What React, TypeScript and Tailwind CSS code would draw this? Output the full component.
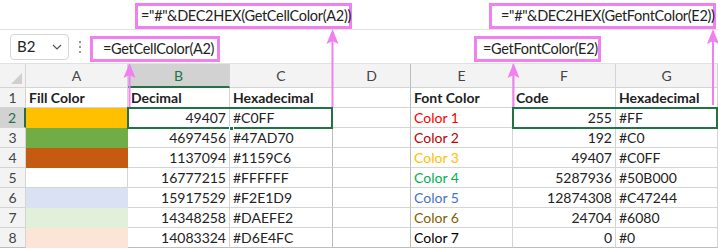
import React from 'react';

type Row = { fill: string; dec: string; hex: string; label: string; labelColor: string; code: string; codeHex: string };

const rows: Row[] = [
  { fill: '#FFC000', dec: '49407', hex: '#C0FF', label: 'Color 1', labelColor: '#FF0000', code: '255', codeHex: '#FF' },
  { fill: '#70AD47', dec: '4697456', hex: '#47AD70', label: 'Color 2', labelColor: '#C00000', code: '192', codeHex: '#C0' },
  { fill: '#C55A11', dec: '1137094', hex: '#1159C6', label: 'Color 3', labelColor: '#FFC000', code: '49407', codeHex: '#C0FF' },
  { fill: '#FFFFFF', dec: '16777215', hex: '#FFFFFF', label: 'Color 4', labelColor: '#00B050', code: '5287936', codeHex: '#50B000' },
  { fill: '#D9E1F2', dec: '15917529', hex: '#F2E1D9', label: 'Color 5', labelColor: '#4472C4', code: '12874308', codeHex: '#C47244' },
  { fill: '#E2EFDA', dec: '14348258', hex: '#DAEFE2', label: 'Color 6', labelColor: '#806000', code: '24704', codeHex: '#6080' },
  { fill: '#FCE4D6', dec: '14083324', hex: '#D6E4FC', label: 'Color 7', labelColor: '#000000', code: '0', codeHex: '#0' },
];

const cols = ['A', 'B', 'C', 'D', 'E', 'F', 'G'];
const grid = 'grid grid-cols-[26px_102px_102px_103px_78px_102px_103px_102px]';
const cell = 'h-[20px] border-r border-b border-[#d4d4d4] px-[3px] leading-[19px] whitespace-nowrap overflow-hidden';

const Callout = ({ className, children }: { className: string; children: React.ReactNode }) => (
  <div
    className={`absolute border-[3px] border-[#f07ff0] bg-white font-['Lato',sans-serif] text-[14.5px] tracking-[-0.3px] leading-[20px] text-[#222] whitespace-nowrap ${className}`}
  >
    {children}
  </div>
);

const Arrow = ({ x, from, to }: { x: number; from: number; to: number }) => (
  <g fill="#f07ff0" stroke="#f07ff0">
    <line x1={x} y1={from} x2={x} y2={to + 8} strokeWidth={2} />
    <polygon points={`${x},${to} ${x - 6},${to + 15} ${x},${to + 12} ${x + 6},${to + 15}`} strokeWidth={0} />
  </g>
);

export default function App() {
  return (
    <div className="relative w-[718px] h-[249px] overflow-hidden bg-white font-['Lato',sans-serif] text-[#222]">
      {/* space above the formula bar */}
      <div className="h-[30px] border-b border-[#e1e1e1]" />

      {/* formula bar */}
      <div className="h-[34px] flex items-center border-b border-[#e1e1e1]">
        <div className="ml-[10px] w-[59px] h-[26px] rounded-[4px] border border-[#d6d6d6] flex items-center justify-between pl-[6px] pr-[6px] text-[15px]">
          <span>B2</span>
          <svg width="10" height="6" viewBox="0 0 10 6">
            <path d="M1 1l4 4 4-4" fill="none" stroke="#555" strokeWidth="1.2" />
          </svg>
        </div>
        <div className="ml-[10px] flex flex-col gap-[3px]">
          <span className="w-[2px] h-[2px] bg-[#999]" />
          <span className="w-[2px] h-[2px] bg-[#999]" />
          <span className="w-[2px] h-[2px] bg-[#999]" />
        </div>
      </div>

      {/* sheet */}
      <div className="font-['Lato','Carlito',sans-serif] text-[14px]">
        <div className={`${grid} h-[24px] bg-[#f3f3f3] text-[14px] text-[#444]`}>
          <div className="relative border-r border-b border-[#d4d4d4]">
            <svg className="absolute right-[3px] bottom-[3px]" width="11" height="11" viewBox="0 0 11 11">
              <path d="M11 0V11H0Z" fill="#cfcfcf" />
            </svg>
          </div>
          {cols.map(c => (
            <div
              key={c}
              className={
                c === 'B'
                  ? 'flex items-center justify-center bg-[#d2d2d2] text-[#217346] border-r border-[#d4d4d4] border-b-2 border-b-[#217346]'
                  : `flex items-center justify-center border-r border-b border-[#d4d4d4] ${c === 'C' || c === 'D' ? 'border-r-[#bdbdbd]' : ''}`
              }
            >
              {c}
            </div>
          ))}
        </div>

        <div className={grid}>
          <div className={`${cell} text-center bg-[#f3f3f3] text-[#444]`}>1</div>
          <div className={`${cell} font-bold`}>Fill Color</div>
          <div className={`${cell} font-bold`}>Decimal</div>
          <div className={`${cell} font-bold border-r-[#bdbdbd]`}>Hexadecimal</div>
          <div className={`${cell} border-r-[#bdbdbd]`} />
          <div className={`${cell} font-bold`}>Font Color</div>
          <div className={`${cell} font-bold`}>Code</div>
          <div className={`${cell} font-bold`}>Hexadecimal</div>

          {rows.map((r, i) => {
            const n = i + 2;
            const last = n === 8 ? 'border-b-[#bdbdbd]' : '';
            return (
              <React.Fragment key={n}>
                <div
                  className={`${cell} ${last} text-center ${
                    n === 2 ? 'bg-[#d2d2d2] text-[#217346] border-r-2 border-r-[#217346]' : 'bg-[#f3f3f3] text-[#444]'
                  }`}
                >
                  {n}
                </div>
                <div className={`${cell} ${last}`} style={{ backgroundColor: r.fill, borderColor: r.fill === '#FFFFFF' ? undefined : r.fill }} />
                <div className={`${cell} ${last} text-right`}>{r.dec}</div>
                <div className={`${cell} ${last} border-r-[#bdbdbd]`}>{r.hex}</div>
                <div className={`${cell} ${last} border-r-[#bdbdbd]`} />
                <div className={`${cell} ${last}`} style={{ color: r.labelColor }}>{r.label}</div>
                <div className={`${cell} ${last} text-right`}>{r.code}</div>
                <div className={`${cell} ${last}`}>{r.codeHex}</div>
              </React.Fragment>
            );
          })}
        </div>
      </div>

      {/* selected ranges */}
      <div className="absolute left-[127px] top-[107px] w-[206px] h-[22px] border-2 border-[#217346]" />
      <div className="absolute left-[229px] top-[126px] w-[5px] h-[5px] bg-[#217346] border border-white" />
      <div className="absolute left-[512px] top-[107px] w-[206px] h-[22px] border-2 border-[#217346]" />

      {/* callouts */}
      <Callout className="left-[135px] top-[3px] w-[217px] h-[26px] pl-[3px]">="#"&amp;DEC2HEX(GetCellColor(A2))</Callout>
      <Callout className="left-[489px] top-[3px] w-[227px] h-[26px] pl-[9px]">="#"&amp;DEC2HEX(GetFontColor(E2))</Callout>
      <Callout className="left-[90px] top-[36px] w-[130px] h-[26px] pl-[10px]">=GetCellColor(A2)</Callout>
      <Callout className="left-[474px] top-[36px] w-[127px] h-[26px] pl-[6px]">=GetFontColor(E2)</Callout>

      <svg className="absolute inset-0 pointer-events-none" width="718" height="249">
        <Arrow x={129.5} from={107} to={63} />
        <Arrow x={332.5} from={107} to={29} />
        <Arrow x={513.5} from={107} to={63} />
        <Arrow x={713} from={105} to={29} />
      </svg>
    </div>
  );
}
